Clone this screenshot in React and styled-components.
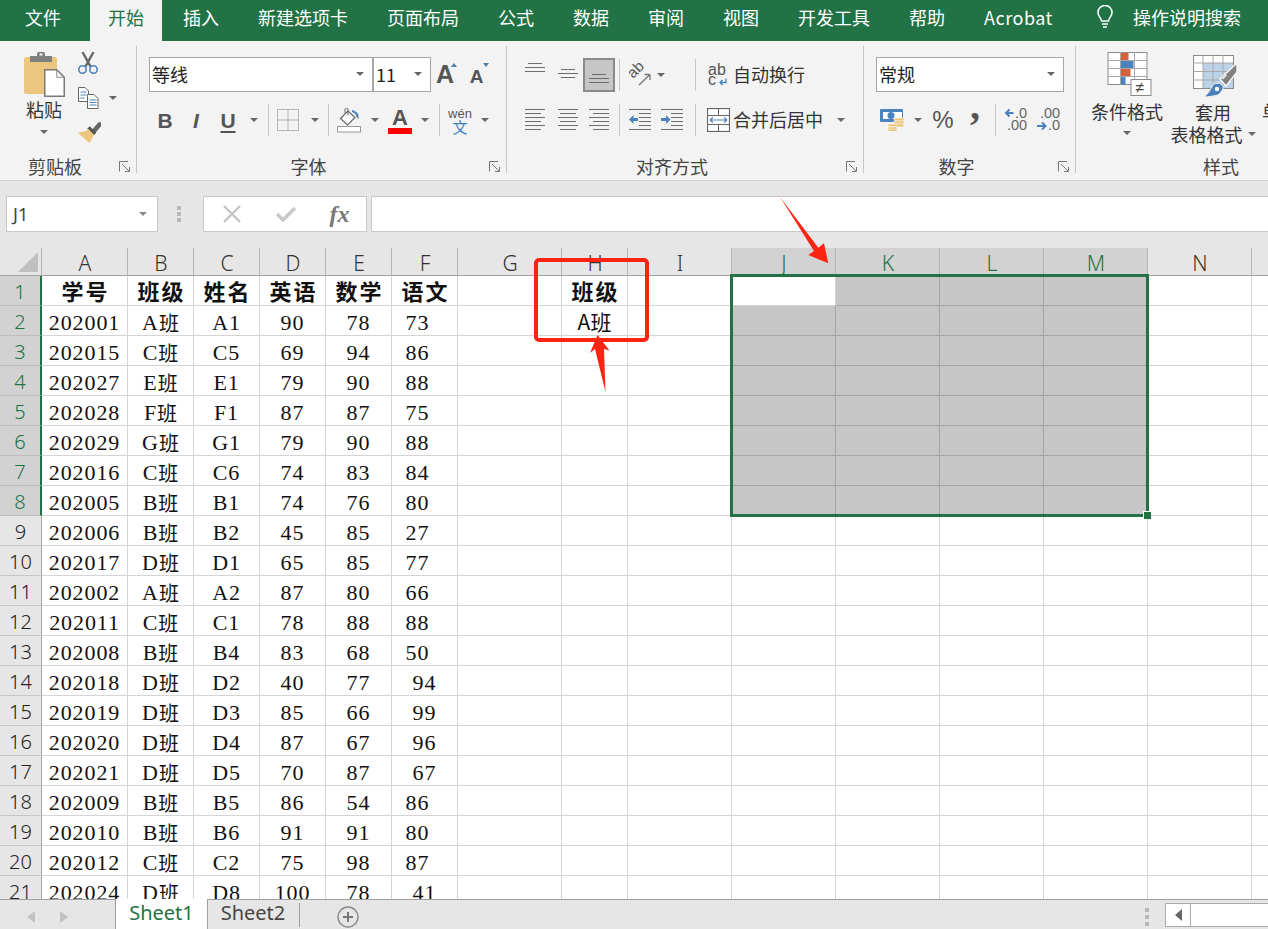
import React from "react";
import styled, { createGlobalStyle } from "styled-components";

const CJK = `"Noto Sans CJK SC", "Noto Sans", sans-serif`;
const LATIN_UI = `"Noto Sans", "Noto Sans CJK SC", sans-serif`;
const GREEN = "#217346";

const Global = createGlobalStyle`
  html, body { margin: 0; padding: 0; background: #fff; }
  * { box-sizing: border-box; }
`;

const Page = styled.div`
  position: relative; width: 1268px; height: 929px; overflow: hidden;
  display: flex; flex-direction: column; font-family: ${CJK}; color: #3a3a3a;
`;

/* ---------- tab bar ---------- */
const TabBar = styled.div`
  height: 41px; flex: none; background: ${GREEN}; display: flex; gap: 3px; padding-left: 7px;
`;
const Tab = styled.div`
  padding: 0 18px 8px; display: flex; align-items: center; font-size: 18px; line-height: 1; white-space: nowrap;
  min-width: ${p => p.$w || 0}px; justify-content: center;
  letter-spacing: ${p => (p.$w ? 0.5 : 0)}px;
  color: ${p => (p.$active ? GREEN : "#fff")};
  background: ${p => (p.$active ? "#f3f3f3" : "transparent")};
  margin-right: ${p => (p.$first ? 8 : 0)}px;
`;
const Search = styled.div`
  margin-left: 21px; display: flex; align-items: center; gap: 18px; color: #fff; font-size: 18px; padding-bottom: 8px;
`;

/* ---------- ribbon ---------- */
const Ribbon = styled.div`
  height: 140px; flex: none; background: #f3f3f3; border-bottom: 1px solid #d2d2d2; display: flex; padding-top: 5px;
`;
const Group = styled.div`
  flex: none; width: ${p => p.$w}px; height: 127px; display: flex; flex-direction: column;
  border-right: ${p => (p.$open ? "none" : "1px solid #c6c6c6")};
`;
const GroupBody = styled.div`
  flex: 1; display: flex; flex-direction: ${p => (p.$row ? "row" : "column")}; min-height: 0;
`;
const GroupLabel = styled.div`
  height: 20px; margin-bottom: -3px; display: flex; align-items: flex-end; font-size: 18px; line-height: 20px; color: #444;
`;
const LabelText = styled.span`
  flex: 1; text-align: center; white-space: nowrap;
`;
const LauncherBox = styled.span`
  flex: none; width: 12px; height: 12px; margin: 0 5px 3px 9px; display: flex;
`;
const ToolRow = styled.div`
  display: flex; align-items: center; height: ${p => p.$h}px; padding-left: ${p => p.$pl}px; margin-top: ${p => p.$mt}px;
`;
const Tool = styled.div`
  position: relative; flex: none; width: ${p => p.$w}px; height: 100%; display: flex; align-items: center;
  justify-content: center; color: #555; padding-right: ${p => p.$pr || 0}px;
`;
const Pressed = styled(Tool)`
  background: #c6c6c6; border: 2px solid #8a8a8a; align-items: flex-end; padding-bottom: 6px; height: 34px; margin-top: 1px;
`;
const Sep = styled.div`
  flex: none; width: ${p => p.$w}px; height: 32px; display: flex; justify-content: center;
  &::before { content: ""; width: 1px; height: 100%; background: #c6c6c6; }
`;
const Caret = styled.span`
  flex: none; width: 0; height: 0; border-left: 4px solid transparent; border-right: 4px solid transparent;
  border-top: 4px solid ${p => p.$color || "#666"};
  margin-top: ${p => p.$mt || 0}px;
`;
const Select = styled.div`
  flex: none; width: ${p => p.$w}px; height: 35px; background: #fff; border: 1px solid #a6a6a6;
  display: flex; align-items: center; justify-content: space-between; padding: 0 8px 2px 2px;
  font-size: 18px; color: #222;
`;
const ToolText = styled.span`
  font-size: 18px; color: #333; white-space: nowrap; line-height: 1; margin-bottom: 2px;
`;
const Bold = styled.span`
  font-family: "Liberation Sans", sans-serif; font-size: ${p => p.$s || 21}px; line-height: 1;
  font-weight: ${p => (p.$light ? 400 : 700)}; font-style: ${p => (p.$i ? "italic" : "normal")};
  color: #555; text-decoration: ${p => (p.$u ? "underline" : "none")}; text-underline-offset: 3px;
  margin-top: ${p => p.$mt || 0}px;
`;
const CommaMark = styled.span`
  font-family: "Liberation Serif", serif; font-weight: 700; font-size: 40px; line-height: 1; color: #555; margin-bottom: 29px;
`;
const Pitch = styled.span`
  position: absolute; top: ${p => p.$t}px; right: ${p => p.$r}px; width: 0; height: 0;
  border-left: 3.5px solid transparent; border-right: 3.5px solid transparent;
  ${p => (p.$up ? "border-bottom: 4px solid #4a7fb5;" : "border-top: 4px solid #4a7fb5;")}
`;
const WenStack = styled.div`
  display: flex; flex-direction: column; align-items: center; line-height: 1;
`;
const WenTop = styled.span`
  font-family: "Liberation Sans", sans-serif; font-size: 13px; color: #555;
`;
const WenBottom = styled.span`
  font-size: 15px; color: #3f7fbf; margin-top: -1px;
`;
const ColorA = styled.div`
  display: flex; flex-direction: column; align-items: center; width: 24px;
`;
const RedBar = styled.span`
  width: 24px; height: 6px; background: #f00; margin-top: -1px;
`;
const PasteCol = styled.div`
  width: 76px; padding: 6px 0 0 12px; display: flex; flex-direction: column; align-items: center;
`;
const PasteText = styled.div`
  font-size: 18px; line-height: 22px; margin-top: 1px; color: #333;
`;
const SmallCol = styled.div`
  margin-top: -1px; display: flex; flex-direction: column;
`;
const SmallSlot = styled.div`
  height: 35px; display: flex; align-items: center; gap: 10px; padding-left: 2px;
`;
const BigCol = styled.div`
  flex: none; width: ${p => p.$w}px; padding-top: ${p => p.$pt}px; display: flex; flex-direction: column; align-items: center;
`;
const BigLine = styled.div`
  height: 22px; display: flex; align-items: center; justify-content: center; gap: 5px; font-size: 18px; color: #333; white-space: nowrap;
  margin-top: ${p => p.$mt || 0}px;
`;
const Cut = styled.div`
  padding: 54px 0 0 14px; font-size: 18px; line-height: 22px; color: #333;
`;

/* ---------- formula bar ---------- */
const FormulaBar = styled.div`
  height: 67px; flex: none; background: #e6e6e6; display: flex; padding-top: 15px; align-items: flex-start;
`;
const NameBox = styled.div`
  margin-left: 6px; width: 152px; height: 36px; background: #fff; border: 1px solid #c8c8c8;
  display: flex; align-items: center; justify-content: space-between; padding: 0 10px 0 6px;
  font-size: 18px; color: #444; font-family: ${LATIN_UI};
`;
const Grip = styled.div`
  width: 45px; height: 36px; padding-right: 3px; display: flex; flex-direction: column; align-items: center; justify-content: center; gap: 2px;
  & > i { width: 4px; height: 4px; background: #b8b8b8; display: block; }
`;
const FxBox = styled.div`
  width: 164px; height: 36px; background: #fff; border: 1px solid #c8c8c8; display: flex; align-items: center;
`;
const FxSlot = styled.div`
  width: ${p => p.$w}px; display: flex; justify-content: center; flex: none;
`;
const Fx = styled.span`
  font-family: "Liberation Serif", serif; font-style: italic; font-weight: 700; font-size: 24px; color: #777; line-height: 1;
`;
const FormulaInput = styled.div`
  margin-left: 4px; flex: 1; height: 36px; background: #fff; border: 1px solid #c8c8c8; border-right: none;
`;

/* ---------- sheet ---------- */
const COLS = [86, 66, 66, 66, 66, 66, 104, 66, 104, 104, 104, 104, 104, 104, 30];
const Sheet = styled.div`
  position: relative; flex: none; height: 651px; overflow: hidden; background: #fff; display: grid;
  grid-template-columns: 42px ${COLS.map(c => `${c}px`).join(" ")};
  grid-template-rows: 28px repeat(21, 30px);
`;
const Corner = styled.div`
  background: #e6e6e6; border-right: 1px solid #b4b4b4; border-bottom: 1px solid #a0a0a0; display: flex; padding: 4px 0 0 18px;
`;
const ColHead = styled.div`
  display: flex; align-items: flex-end; justify-content: center; padding-left: 1px;
  font-family: ${LATIN_UI}; font-weight: 300; font-size: 21px; line-height: 24px;
  background: ${p => (p.$on ? "#d2d2d2" : "#e6e6e6")}; color: ${p => (p.$on ? GREEN : "#333")};
  border-right: 1px solid #b4b4b4; border-bottom: 1px solid #a0a0a0;
`;
const RowHead = styled.div`
  display: flex; align-items: center; justify-content: center; padding-top: 3px;
  font-family: ${LATIN_UI}; font-weight: 300; font-size: 20px; line-height: 1;
  background: ${p => (p.$on ? "#d2d2d2" : "#e6e6e6")}; color: ${p => (p.$on ? GREEN : "#222")};
  border-bottom: 1px solid ${p => (p.$on ? "#bdbdbd" : "#c6c6c6")};
  border-right: ${p => (p.$on ? `2px solid ${GREEN}` : "1px solid #a8a8a8")};
`;
const Cell = styled.div`
  display: flex; align-items: center; justify-content: center; padding-top: 5px; white-space: nowrap; overflow: visible;
  padding-right: ${p => (p.$shift ? 14 : 0)}px;
  background: ${p => (p.$sel ? "#c6c6c6" : "#fff")};
  border-right: 1px solid ${p => (p.$sel ? "#a4a4a4" : "#d4d4d4")};
  border-bottom: 1px solid ${p => (p.$sel ? "#a4a4a4" : "#d4d4d4")};
  font-family: "Liberation Serif", "Noto Sans CJK SC", serif; font-size: 22px; line-height: 24px; color: #111; letter-spacing: .9px;
`;
const HeadText = styled.span`
  font-family: ${CJK}; font-weight: 700; font-size: 22px; letter-spacing: 2px; margin-right: -2px; margin-top: -6px; color: #111;
`;
const Ban = styled.span`
  font-family: ${CJK}; font-size: 20px; letter-spacing: 0; font-weight: 400;
`;
const SansCell = styled.span`
  font-family: ${CJK}; font-size: 21px; letter-spacing: 0; margin-top: -4px;
`;
const SelectionBox = styled.div`
  position: absolute; left: 730px; top: 26px; width: 419px; height: 243px; border: 3px solid ${GREEN}; pointer-events: none;
`;
const Handle = styled.div`
  position: absolute; left: 1143px; top: 263px; width: 8px; height: 8px; background: ${GREEN}; border-left: 1px solid #fff; border-top: 1px solid #fff;
`;

/* ---------- sheet tabs ---------- */
const SheetBar = styled.div`
  flex: 1; background: #e6e6e6; border-top: 1px solid #9e9e9e; display: flex; align-items: stretch; position: relative; z-index: 1;
`;
const NavArrows = styled.div`
  width: 115px; display: flex; align-items: center; padding: 0 0 0 27px; gap: 25px;
`;
const SheetTab = styled.div`
  width: ${p => p.$w}px; margin-top: -1px; display: flex; align-items: center; justify-content: center; font-family: ${LATIN_UI}; font-size: 20px;
  padding-bottom: ${p => (p.$active ? 5 : 8)}px;
  background: ${p => (p.$active ? "#fff" : "transparent")}; color: ${p => (p.$active ? GREEN : "#444")};
  border-left: ${p => (p.$active ? "1px solid #9e9e9e" : "none")};
  border-right: ${p => (p.$active ? "1px solid #9e9e9e" : "none")};
  border-bottom: ${p => (p.$active ? `3px solid ${GREEN}` : "none")};
`;
const TabDivider = styled.div`
  width: 1px; height: 24px; background: #9e9e9e; margin: 3px 0 0 1px;
`;
const AddSheet = styled.div`
  width: 96px; display: flex; align-items: center; padding-left: 37px;
`;
const HScrollGrip = styled(Grip)`
  width: 10px; height: 100%; margin-left: auto; margin-right: 13px; padding: 0; gap: 3px;
`;
const ScrollBtn = styled.div`
  width: 26px; height: 24px; margin-top: 3px; background: #fff; border: 1px solid #ababab; display: flex; align-items: center; justify-content: center;
`;
const ScrollTrack = styled.div`
  width: 77px; height: 24px; margin-top: 3px; background: #fff; border: 1px solid #ababab; border-left: none; border-right: none;
`;

/* ---------- annotations ---------- */
const RedFrame = styled.div`
  position: absolute; left: 534px; top: 258px; width: 115px; height: 84px; border: 4px solid #fb2412; border-radius: 5px; pointer-events: none;
`;
const ArrowLayer = styled.svg`
  position: absolute; left: 0; top: 0; pointer-events: none;
`;

/* ---------- icons ---------- */
const BLUE = "#4a82bd";
const Launcher = () => (
  <LauncherBox>
    <svg width="12" height="11" viewBox="0 0 12 11" fill="none">
      <path d="M.5 10.500V.5H9M3 3l7 7M10.500 6v4.500H6" stroke="#777" />
    </svg>
  </LauncherBox>
);
const Bulb = () => (
  <svg width="20" height="24" viewBox="0 0 20 24" fill="none" stroke="#fff" strokeWidth="1.6">
    <path d="M6.500 16c0-3-3.500-4.500-3.500-8.500a7 7 0 0 1 14 0c0 4-3.500 5.500-3.500 8.500z" />
    <path d="M7 19h6M8 22h4" />
  </svg>
);
const PasteIcon = () => (
  <svg width="41" height="45" viewBox="0 0 41 45">
    <rect x="0" y="5" width="33" height="37" rx="2.500" fill="#ecc67f" />
    <path d="M6 4h7V1.500q0-1.500 1.500-1.500h5q1.500 0 1.500 1.500V4h7v6H6z" fill="#7f7f7f" />
    <rect x="15.500" y="1.500" width="3" height="2" fill="#f3f3f3" />
    <path d="M20.750 17.750h12l7.500 7.500v19h-19.500z" fill="#fff" stroke="#7a7a7a" strokeWidth="1.500" />
    <path d="M32.750 17.750v7.500h7.500" fill="none" stroke="#8a8a8a" />
  </svg>
);
const Scissors = () => (
  <svg width="20" height="22" viewBox="0 0 20 22" fill="none">
    <path d="M4.500 0l8 14.500M15.500 0l-8 14.500" stroke="#666" strokeWidth="2.400" />
    <circle cx="4.500" cy="17.500" r="3.700" stroke={BLUE} strokeWidth="1.600" />
    <circle cx="15.500" cy="17.500" r="3.700" stroke={BLUE} strokeWidth="1.600" />
  </svg>
);
const CopyIcon = () => (
  <svg width="21" height="22" viewBox="0 0 21 22" fill="none">
    <path d="M.5.500h6.500l3.500 3.500v10.500H.5z" fill="#fff" stroke="#666" />
    <path d="M2.500 5h6M2.500 8h6M2.500 11h4" stroke={BLUE} />
    <path d="M9.500 7.500h6.500l4 4v10h-10.500z" fill="#fff" stroke="#666" />
    <path d="M11.500 13h7M11.500 15.500h7M11.500 18h7" stroke={BLUE} />
  </svg>
);
const BrushIcon = () => (
  <svg width="23" height="21" viewBox="0 0 23 21" fill="none">
    <path d="M16 9l5.500-6.500" stroke="#666" strokeWidth="4.500" strokeLinecap="round" />
    <path d="M10.500 5.500l6.500 6.500" stroke="#555" strokeWidth="3.500" />
    <path d="M0 11l8-2 2.500-2 5.500 6-1.500 3-3 5z" fill="#ecc67f" />
  </svg>
);
const BorderIcon = () => (
  <svg width="22" height="22" viewBox="0 0 22 22" fill="none" stroke="#777" strokeDasharray="1 1">
    <rect x=".5" y=".5" width="21" height="21" />
    <path d="M11 .5v21M.5 11h21" />
  </svg>
);
const FillIcon = () => (
  <svg width="24" height="25" viewBox="0 0 24 25" fill="none">
    <path d="M3.500 10.500l7.500-7.500 7 6.500-7.500 7.500z" fill="#fff" stroke="#666" strokeWidth="1.200" />
    <path d="M8 5V1.500a1.500 1.500 0 0 1 3 0V7.500" stroke="#666" />
    <path d="M15 2c4.500 1 7.500 4 6.500 9.500-1-1-1-2-2-2.500-.5-2.500-2-4.500-4.500-5z" fill={BLUE} />
    <rect x=".5" y="18.500" width="23" height="5.500" fill="#fff" stroke="#999" />
  </svg>
);
const Lines = ({ w = 20, h = 24, rows }) => (
  <svg width={w} height={h} viewBox={`0 0 ${w} ${h}`} stroke="#6e6e6e" fill="none">
    {rows.map(([y, a, b]) => <path key={y} d={`M${a} ${y + 0.5}H${b}`} />)}
  </svg>
);
const LEFT = [[1, 0, 20], [5, 0, 16], [9, 0, 20], [13, 0, 16], [17, 0, 20], [21, 0, 16]];
const MID = [[1, 0, 20], [5, 2, 18], [9, 0, 20], [13, 2, 18], [17, 0, 20], [21, 2, 18]];
const RIGHT = [[1, 0, 20], [5, 4, 20], [9, 0, 20], [13, 4, 20], [17, 0, 20], [21, 4, 20]];
const Indent = ({ out }) => (
  <svg width="23" height="24" viewBox="0 0 23 24" fill="none">
    <path d="M0 1.500h22M10 5.500h12M10 9.500h12M10 13.500h12M10 17.500h12M0 21.500h22" stroke="#6e6e6e" />
    <path d={out ? "M0 11.500l4.500-4.500v3H9v3H4.500v3z" : "M9.500 11.500L5 7v3H0v3h5v3z"} fill={BLUE} />
  </svg>
);
const Orient = () => (
  <svg width="26" height="28" viewBox="0 0 26 28" fill="none" overflow="visible">
    <text transform="translate(6 18) rotate(-45)" fontFamily="Liberation Sans" fontSize="15" fill="#555">ab</text>
    <path d="M12 24L23 13.500M23 13.500h-5.500M23 13.500v5.500" stroke="#777" strokeWidth="1.300" />
  </svg>
);
const WrapIcon = () => (
  <svg width="20" height="26" viewBox="0 0 20 26" fill="none" overflow="visible">
    <text x="1" y="12.500" fontFamily="Liberation Sans" fontSize="16" fill="#555">ab</text>
    <text x="1" y="23" fontFamily="Liberation Sans" fontSize="16" fill="#555">c</text>
    <path d="M19 16.500v4h-6M15.500 18l-2.500 2.500 2.500 2.500" stroke={BLUE} strokeWidth="1.300" />
  </svg>
);
const MergeIcon = () => (
  <svg width="23" height="24" viewBox="0 0 23 24" fill="none">
    <rect x=".5" y=".5" width="22" height="23" fill="#fff" stroke="#666" strokeWidth="1.200" />
    <path d="M0 7.500h23M0 16.500h23M11.500 0v7M11.500 17v7" stroke="#666" />
    <path d="M3 12h17M3 12l3-2.500M3 12l3 2.500M20 12l-3-2.500M20 12l-3 2.500" stroke={BLUE} strokeWidth="1.200" />
  </svg>
);
const Currency = () => (
  <svg width="24" height="22" viewBox="0 0 24 22">
    <rect x="0" y="0" width="23" height="13" rx="1" fill={BLUE} />
    <rect x="3" y="3" width="19" height="7" fill="#fff" />
    <circle cx="11" cy="6.500" r="3.500" fill={BLUE} />
    {[9, 12, 15].map(y => <rect key={y} x="14" y={y} width="10" height="3" rx="1" fill="#ecc67f" stroke="#fff" strokeWidth=".5" />)}
    {[15, 18, 20].map(y => <rect key={y} x="8" y={y} width="9" height="2.500" rx="1" fill="#ecc67f" stroke="#fff" strokeWidth=".4" />)}
  </svg>
);
const DecText = styled.text`
  font-family: "Liberation Sans", sans-serif; font-size: 14.500px; fill: #666;
`;
const Decimal = ({ more }) => (
  <svg width="26" height="28" viewBox="0 0 26 28" fill="none" overflow="visible">
    <DecText x={more ? 11 : 4} y="11.500">{more ? ".0" : ".00"}</DecText>
    <DecText x={more ? 3 : 12} y="24">{more ? ".00" : ".0"}</DecText>
    {more
      ? <path d="M9.500 7H2M5.500 3.500L2 7l3.500 3.500" stroke={BLUE} strokeWidth="2" />
      : <path d="M1 20h8M6 16.500L9.500 20 6 23.500" stroke={BLUE} strokeWidth="2" />}
  </svg>
);
const CondIcon = () => (
  <svg width="45" height="44" viewBox="0 0 45 44" fill="none" overflow="visible">
    <g transform="translate(2.500 0)">
      <rect x=".5" y=".5" width="39" height="32" fill="#fff" stroke="#8a8a8a" />
      <rect x="13" y="1" width="8" height="7.500" fill="#d75f3c" />
      <rect x="13" y="9" width="13" height="7.500" fill={BLUE} />
      <rect x="13" y="17" width="10" height="7.500" fill="#d75f3c" />
      <rect x="13" y="25" width="5" height="7.500" fill={BLUE} />
      <path d="M13 0v33M27 0v33M0 8.500h40M0 16.500h40M0 24.500h40" stroke="#a8a8a8" />
      <rect x="23.500" y="27.500" width="20" height="16" fill="#fff" stroke="#8a8a8a" />
      <text x="28" y="41" fontFamily="Liberation Sans" fontSize="16" fill="#444">≠</text>
    </g>
  </svg>
);
const TableIcon = () => (
  <svg width="48" height="42" viewBox="0 0 48 42" fill="none" overflow="visible">
    <g transform="translate(4 0)">
      <rect x=".5" y=".5" width="40" height="33" fill="#fff" stroke="#8a8a8a" />
      <rect x="10" y="8" width="30" height="25" fill="#bcd2e8" />
      <path d="M10 0v33M20 0v33M30 0v33M0 8h40M0 16.500h40M0 25h40" stroke="#a8a8a8" />
      <path d="M44 8v9L33 31l-6-7z" fill="#7f7f7f" stroke="#f3f3f3" strokeWidth="1.500" />
      <path d="M29.500 24l4-4" stroke="#f3f3f3" strokeWidth="1.500" />
      <path d="M11 42c4-3 6-7 9-12 3-3 8-2 10 1 1 3-2 6-5 9-5 1-9 2-14 2z" fill={BLUE} stroke="#f3f3f3" />
      <circle cx="24" cy="34" r="2.200" fill="#fff" />
    </g>
  </svg>
);
const Cross = () => (
  <svg width="18" height="18" viewBox="0 0 18 18" stroke="#c4c4c4" strokeWidth="2.400"><path d="M1 1l16 16M17 1L1 17" /></svg>
);
const Check = () => (
  <svg width="20" height="16" viewBox="0 0 20 16" fill="none" stroke="#c8c8c8" strokeWidth="3.600"><path d="M1 8l6 6L19 2" /></svg>
);
const NavArrow = ({ d }) => (
  <svg width="8" height="12" viewBox="0 0 8 12" fill="#c2c2c2"><path d={d} /></svg>
);
const CornerMark = () => (
  <svg width="20" height="20" viewBox="0 0 20 20"><path d="M20 0v20H0z" fill="#c0c0c0" /></svg>
);
const Plus = () => (
  <svg width="22" height="22" viewBox="0 0 22 22" fill="none">
    <circle cx="11" cy="11" r="10" stroke="#8a8a8a" strokeWidth="1.400" />
    <path d="M6 11h10M11 6v10" stroke="#777" strokeWidth="2" />
  </svg>
);

/* ---------- data ---------- */
const DATA = [
  ["202001", "A", "A1", "90", "78", "73", 1],
  ["202015", "C", "C5", "69", "94", "86", 1],
  ["202027", "E", "E1", "79", "90", "88", 1],
  ["202028", "F", "F1", "87", "87", "75", 1],
  ["202029", "G", "G1", "79", "90", "88", 1],
  ["202016", "C", "C6", "74", "83", "84", 1],
  ["202005", "B", "B1", "74", "76", "80", 1],
  ["202006", "B", "B2", "45", "85", "27", 1],
  ["202017", "D", "D1", "65", "85", "77", 1],
  ["202002", "A", "A2", "87", "80", "66", 1],
  ["202011", "C", "C1", "78", "88", "88", 1],
  ["202008", "B", "B4", "83", "68", "50", 1],
  ["202018", "D", "D2", "40", "77", "94", 0],
  ["202019", "D", "D3", "85", "66", "99", 0],
  ["202020", "D", "D4", "87", "67", "96", 0],
  ["202021", "D", "D5", "70", "87", "67", 0],
  ["202009", "B", "B5", "86", "54", "86", 1],
  ["202010", "B", "B6", "91", "91", "80", 1],
  ["202012", "C", "C2", "75", "98", "87", 1],
  ["202024", "D", "D8", "100", "78", "41", 0],
];
const HEAD = ["学号", "班级", "姓名", "英语", "数学", "语文"];
const LETTERS = ["A", "B", "C", "D", "E", "F", "G", "H", "I", "J", "K", "L", "M", "N", ""];
const isSelCol = i => i >= 9 && i <= 12;

function rowCells(r) {
  const cells = [];
  for (let c = 0; c < 15; c++) {
    let content = null;
    let shift = false;
    if (r === 0 && c < 6) content = <HeadText>{HEAD[c]}</HeadText>;
    else if (r === 0 && c === 7) content = <HeadText>班级</HeadText>;
    else if (r === 1 && c === 7) content = <SansCell>A班</SansCell>;
    else if (r > 0 && c < 6) {
      const row = DATA[r - 1];
      content = c === 1 ? <>{row[1]}<Ban>班</Ban></> : row[c];
      shift = c === 5 && !!row[6];
    }
    const sel = isSelCol(c) && r < 8 && !(r === 0 && c === 9);
    cells.push(<Cell key={c} $sel={sel} $shift={shift}>{content}</Cell>);
  }
  return cells;
}

const TABS = ["插入", "新建选项卡", "页面布局", "公式", "数据", "审阅", "视图", "开发工具", "帮助"];

export default function App() {
  return (
    <Page>
      <Global />
      <TabBar>
        <Tab $first>文件</Tab>
        <Tab $active>开始</Tab>
        {TABS.map(t => <Tab key={t}>{t}</Tab>)}
        <Tab $w={105}>Acrobat</Tab>
        <Search><Bulb />操作说明搜索</Search>
      </TabBar>

      <Ribbon>
        <Group $w={137}>
          <GroupBody $row>
            <PasteCol>
              <PasteIcon />
              <PasteText>粘贴</PasteText>
              <Caret $mt={10} />
            </PasteCol>
            <SmallCol>
              <SmallSlot><Scissors /></SmallSlot>
              <SmallSlot><CopyIcon /><Caret /></SmallSlot>
              <SmallSlot><BrushIcon /></SmallSlot>
            </SmallCol>
          </GroupBody>
          <GroupLabel><LabelText>剪贴板</LabelText><Launcher /></GroupLabel>
        </Group>

        <Group $w={370}>
          <GroupBody>
            <ToolRow $h={35} $pl={12} $mt={11}>
              <Select $w={224}>等线<Caret /></Select>
              <Select $w={58}>11<Caret /></Select>
              <Tool $w={32} $pr={4}><Bold $s={25}>A</Bold><Pitch $up $t={6} $r={6} /></Tool>
              <Tool $w={34} $pr={7}><Bold $s={19} $mt={4}>A</Bold><Pitch $t={6} $r={8} /></Tool>
            </ToolRow>
            <ToolRow $h={40} $pl={12} $mt={8}>
              <Tool $w={32}><Bold>B</Bold></Tool>
              <Tool $w={30}><Bold $i>I</Bold></Tool>
              <Tool $w={34}><Bold $u>U</Bold></Tool>
              <Tool $w={18}><Caret /></Tool>
              <Sep $w={10} />
              <Tool $w={30}><BorderIcon /></Tool>
              <Tool $w={24}><Caret /></Tool>
              <Sep $w={2} />
              <Tool $w={40}><FillIcon /></Tool>
              <Tool $w={12}><Caret /></Tool>
              <Tool $w={38}><ColorA><Bold $s={22}>A</Bold><RedBar /></ColorA></Tool>
              <Tool $w={12}><Caret /></Tool>
              <Sep $w={16} />
              <Tool $w={26}><WenStack><WenTop>wén</WenTop><WenBottom>文</WenBottom></WenStack></Tool>
              <Tool $w={24}><Caret /></Tool>
            </ToolRow>
          </GroupBody>
          <GroupLabel><LabelText>字体</LabelText><Launcher /></GroupLabel>
        </Group>

        <Group $w={357}>
          <GroupBody>
            <ToolRow $h={35} $pl={11} $mt={11}>
              <Tool $w={34}><Lines h={35} rows={[[6, 3, 17], [10, 0, 20], [14, 0, 20]]} /></Tool>
              <Tool $w={31}><Lines h={35} rows={[[12, 3, 17], [16, 0, 20], [20, 3, 17]]} /></Tool>
              <Pressed $w={32}><Lines h={12} rows={[[2, 3, 17], [6, 0, 20], [10, 0, 20]]} /></Pressed>
              <Sep $w={8} />
              <Tool $w={34}><Orient /></Tool>
              <Tool $w={8}><Caret /></Tool>
              <Tool $w={25} />
              <Sep $w={10} />
              <Tool $w={33}><WrapIcon /></Tool>
              <ToolText>自动换行</ToolText>
            </ToolRow>
            <ToolRow $h={40} $pl={11} $mt={8}>
              <Tool $w={34}><Lines rows={LEFT} /></Tool>
              <Tool $w={31}><Lines rows={MID} /></Tool>
              <Tool $w={32}><Lines rows={RIGHT} /></Tool>
              <Sep $w={8} />
              <Tool $w={34}><Indent out /></Tool>
              <Tool $w={30}><Indent /></Tool>
              <Sep $w={16} />
              <Tool $w={30}><MergeIcon /></Tool>
              <ToolText>合并后居中</ToolText>
              <Tool $w={36}><Caret /></Tool>
            </ToolRow>
          </GroupBody>
          <GroupLabel><LabelText>对齐方式</LabelText><Launcher /></GroupLabel>
        </Group>

        <Group $w={212}>
          <GroupBody>
            <ToolRow $h={35} $pl={12} $mt={11}>
              <Select $w={188}>常规<Caret /></Select>
            </ToolRow>
            <ToolRow $h={40} $pl={12} $mt={8}>
              <Tool $w={32}><Currency /></Tool>
              <Tool $w={20}><Caret /></Tool>
              <Tool $w={30}><Bold $s={24} $light>%</Bold></Tool>
              <Tool $w={34}><CommaMark>,</CommaMark></Tool>
              <Sep $w={6} />
              <Tool $w={38}><Decimal more /></Tool>
              <Tool $w={26}><Decimal /></Tool>
            </ToolRow>
          </GroupBody>
          <GroupLabel><LabelText>数字</LabelText><Launcher /></GroupLabel>
        </Group>

        <Group $w={290} $open>
          <GroupBody $row>
            <BigCol $w={102} $pt={6}>
              <CondIcon />
              <BigLine $mt={4}>条件格式</BigLine>
              <BigLine><Caret /></BigLine>
            </BigCol>
            <BigCol $w={70} $pt={9}>
              <TableIcon />
              <BigLine $mt={4}>套用</BigLine>
              <BigLine>表格格式<Caret /></BigLine>
            </BigCol>
            <Cut>单</Cut>
          </GroupBody>
          <GroupLabel><LabelText>样式</LabelText></GroupLabel>
        </Group>
      </Ribbon>

      <FormulaBar>
        <NameBox>J1<Caret $color="#888" /></NameBox>
        <Grip><i /><i /><i /></Grip>
        <FxBox>
          <FxSlot $w={55}><Cross /></FxSlot>
          <FxSlot $w={54}><Check /></FxSlot>
          <FxSlot $w={53}><Fx>fx</Fx></FxSlot>
        </FxBox>
        <FormulaInput />
      </FormulaBar>

      <Sheet>
        <Corner><CornerMark /></Corner>
        {LETTERS.map((l, i) => <ColHead key={i} $on={isSelCol(i)}>{l}</ColHead>)}
        {Array.from({ length: 21 }, (_, r) => (
          <React.Fragment key={r}>
            <RowHead $on={r < 8}>{r + 1}</RowHead>
            {rowCells(r)}
          </React.Fragment>
        ))}
        <SelectionBox />
        <Handle />
      </Sheet>

      <SheetBar>
        <NavArrows>
          <NavArrow d="M8 0v12L0 6z" />
          <NavArrow d="M0 0v12l8-6z" />
        </NavArrows>
        <SheetTab $active $w={93}>Sheet1</SheetTab>
        <SheetTab $w={90}>Sheet2</SheetTab>
        <TabDivider />
        <AddSheet><Plus /></AddSheet>
        <HScrollGrip><i /><i /><i /></HScrollGrip>
        <ScrollBtn><svg width="7" height="12" viewBox="0 0 7 12" fill="#666"><path d="M7 0v12L0 6z" /></svg></ScrollBtn>
        <ScrollTrack />
      </SheetBar>

      <RedFrame />
      <ArrowLayer width="1268" height="929" viewBox="0 0 1268 929">
        <path fill="#fb2412" d="M780 197L818.300 247.700L824 243.300L828.300 263.300L808.300 255L814 251z" />
        <path fill="#fb2412" d="M597.500 335L609.500 350.500L604 349L605.500 392L595 349L590 353z" />
      </ArrowLayer>
    </Page>
  );
}
